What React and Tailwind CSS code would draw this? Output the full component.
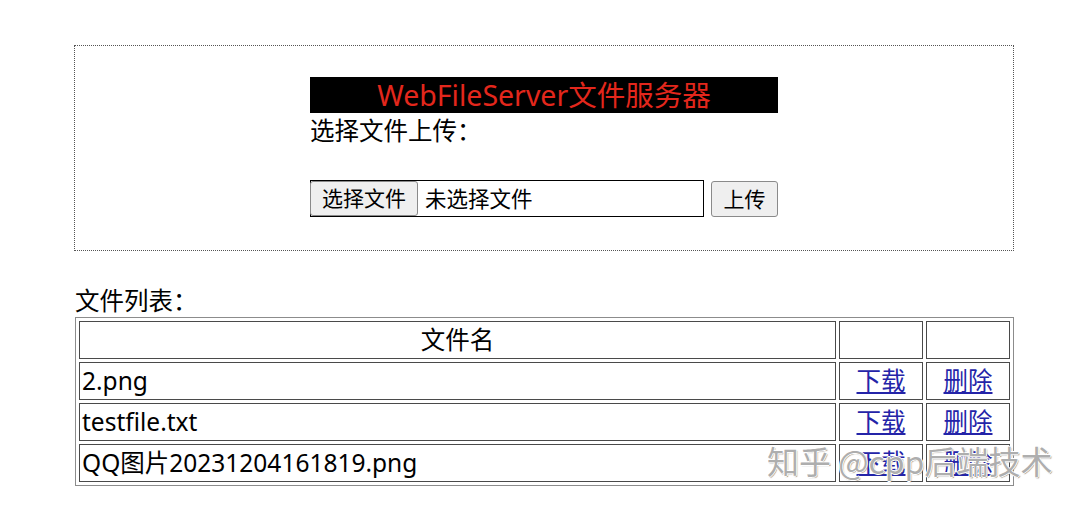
import React from 'react';

const files = ['2.png', 'testfile.txt', 'QQ图片20231204161819.png'];

const cell = 'border border-[#4a4a4a] p-0 px-[2px] h-[38px] leading-[34px]';

const App = () => {
  return (
    <div className="relative min-h-[510px] bg-white text-black text-[24.5px] font-['Noto_Sans','Noto_Sans_CJK_SC',sans-serif] pt-[45px]">
      <div className="ml-[74px] w-[940px] border border-dotted border-[#555] pt-[31px] pb-[33px]">
        <div className="w-[468px] mx-auto">
          <div className="h-[36px] leading-[36px] bg-black text-[#e3271c] text-[28.5px] text-center">
            WebFileServer文件服务器
          </div>
          <div className="h-[36px] leading-[36px]">选择文件上传：</div>
          <div className="mt-[31px] flex items-center gap-[7px] h-[37px]">
            <div className="w-[395px] h-[37px] border border-black flex items-center">
              <span className="w-[108px] h-[35px] text-center bg-[#efefef] border border-[#8a8a8a] rounded-[3px] leading-[33px] text-[21px] -ml-px">
                选择文件
              </span>
              <span className="ml-[7px] text-[21.5px] leading-[35px]">未选择文件</span>
            </div>
            <span className="w-[67px] h-[36px] bg-[#efefef] border border-[#8a8a8a] rounded-[3px] text-center leading-[34px] text-[21px]">
              上传
            </span>
          </div>
        </div>
      </div>

      <div className="ml-[75px] mt-[34px] leading-[32px]">文件列表：</div>
      <table className="ml-[75px] w-[939px] border border-[#8c8c8c] border-separate border-spacing-[3px]">
        <thead>
          <tr>
            <th className={`${cell} w-[757px] font-normal text-center`}>文件名</th>
            <th className={`${cell} w-[84px] font-normal`}></th>
            <th className={`${cell} w-[84px] font-normal`}></th>
          </tr>
        </thead>
        <tbody>
          {files.map((name) => (
            <tr key={name}>
              <td className={`${cell} text-left`}>{name}</td>
              <td className={`${cell} text-center`}>
                <a href="#" className="text-[#2424a8] underline">下载</a>
              </td>
              <td className={`${cell} text-center`}>
                <a href="#" className="text-[#2424a8] underline">删除</a>
              </td>
            </tr>
          ))}
        </tbody>
      </table>

      {/* watermark */}
      <div className="absolute left-[767px] top-[439px] text-[32px] leading-[42px] text-[#a3a3a3]/90 whitespace-nowrap font-['Noto_Sans_CJK_SC',sans-serif] [text-shadow:1px_0_0_#fff,-1px_0_0_#fff,0_1px_0_#fff,0_-1px_0_#fff,1px_1px_1px_#777]">
        知乎 @cpp后端技术
      </div>
    </div>
  );
};

export default App;
